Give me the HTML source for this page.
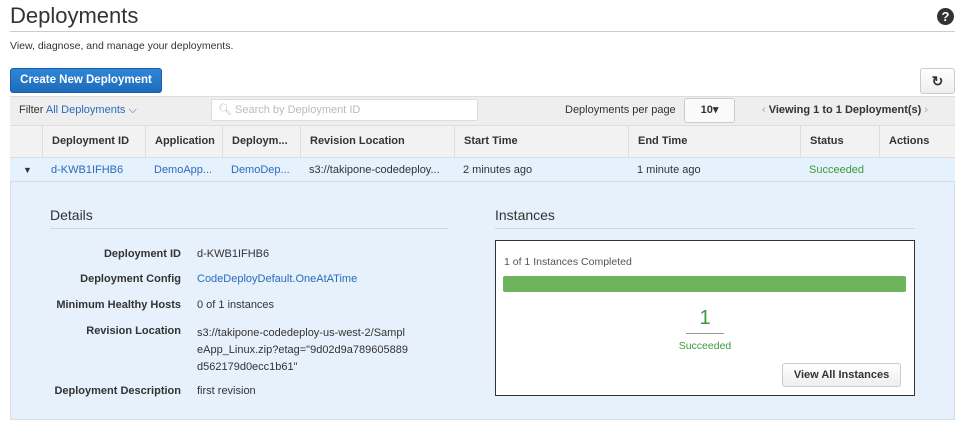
<!DOCTYPE html>
<html><head><style>
*{margin:0;padding:0;box-sizing:border-box}
body{width:960px;height:425px;background:#fff;font-family:"Liberation Sans",sans-serif;font-size:11px;color:#333;position:relative;overflow:hidden}
.a{position:absolute;white-space:nowrap}
.b{font-weight:bold}
.lk{color:#2a6bbd}
.g{color:#3c9a3c}
.th{position:absolute;top:125px;height:33px;line-height:33px;padding-left:9px;font-weight:bold;border-left:1px solid #ddd}
.td{position:absolute;top:158px;height:24px;line-height:24px;padding-left:9px}
.lb{position:absolute;right:779px;font-weight:bold;text-align:right}
.vl{position:absolute;left:197px}
</style></head><body>
<div class="a" style="left:10px;top:3px;font-size:22px;color:#333">Deployments</div>
<div class="a" style="left:937px;top:8px;width:17px;height:17px;border-radius:50%;background:#333;color:#fff;font-weight:bold;font-size:13px;text-align:center;line-height:17px">?</div>
<div class="a" style="left:10px;top:31px;width:945px;height:1px;background:#ccc"></div>
<div class="a" style="left:10px;top:40px;font-size:10.5px">View, diagnose, and manage your deployments.</div>
<div class="a b" style="left:10px;top:68px;width:152px;height:25px;border-radius:3px;background:linear-gradient(#2f86d6,#1e6cbc);border:1px solid #1a5fa8;color:#fff;text-align:center;line-height:23px;font-size:11.5px">Create New Deployment</div>
<div class="a" style="left:920px;top:68px;width:35px;height:26px;border:1px solid #ccc;border-radius:3px;background:linear-gradient(#fff,#eee);text-align:center;line-height:24px;font-weight:bold;font-size:14px">&#x21bb;</div>
<div class="a" style="left:10px;top:96px;width:945px;height:29px;background:#eee;border-top:1px solid #ddd"></div>
<div class="a" style="left:19px;top:104px">Filter <span class="lk">All Deployments &#x2335;</span></div>
<div class="a" style="left:211px;top:99px;width:267px;height:22px;background:#fff;border:1px solid #ddd;border-radius:2px;color:#bbb;line-height:20px;padding-left:6px">&#x1F50D;&#xFE0E; Search by Deployment ID</div>
<div class="a" style="left:565px;top:104px">Deployments per page</div>
<div class="a b" style="left:684px;top:98px;width:51px;height:25px;background:#fafafa;border:1px solid #ccc;border-radius:3px;text-align:center;line-height:23px">10&#x25BE;</div>
<div class="a" style="left:762px;top:104px"><span style="color:#aaa">&lsaquo;</span> <b>Viewing 1 to 1 Deployment(s)</b> <span style="color:#aaa">&rsaquo;</span></div>
<div class="a" style="left:10px;top:125px;width:945px;height:33px;background:#f2f2f2;border-top:1px solid #ddd;border-bottom:1px solid #ddd"></div>
<div class="th" style="left:42px">Deployment ID</div>
<div class="th" style="left:145px">Application</div>
<div class="th" style="left:222px">Deploym...</div>
<div class="th" style="left:300px">Revision Location</div>
<div class="th" style="left:454px">Start Time</div>
<div class="th" style="left:628px">End Time</div>
<div class="th" style="left:800px">Status</div>
<div class="th" style="left:879px">Actions</div>
<div class="a" style="left:10px;top:158px;width:945px;height:24px;background:#e5f1fc;border-bottom:1px solid #d4dde6"></div>
<div class="td" style="left:14px;font-size:9px">&#x25BC;</div>
<div class="td lk" style="left:42px">d-KWB1IFHB6</div>
<div class="td lk" style="left:145px">DemoApp...</div>
<div class="td lk" style="left:222px">DemoDep...</div>
<div class="td" style="left:300px">s3://takipone-codedeploy...</div>
<div class="td" style="left:454px">2 minutes ago</div>
<div class="td" style="left:628px">1 minute ago</div>
<div class="td g" style="left:800px">Succeeded</div>
<div class="a" style="left:10px;top:182px;width:945px;height:238px;background:#e6f1fc;border:1px solid #d8dde3;border-top:none"></div>
<div class="a" style="left:50px;top:207px;font-size:14px">Details</div>
<div class="a" style="left:50px;top:228px;width:398px;height:1px;background:#cdd5dd"></div>
<div class="lb" style="top:248px">Deployment ID</div><div class="vl" style="top:248px">d-KWB1IFHB6</div>
<div class="lb" style="top:273px">Deployment Config</div><div class="vl lk" style="top:273px">CodeDeployDefault.OneAtATime</div>
<div class="lb" style="top:299px">Minimum Healthy Hosts</div><div class="vl" style="top:299px">0 of 1 instances</div>
<div class="lb" style="top:325px">Revision Location</div><div class="vl" style="top:325px;line-height:17px">s3://takipone-codedeploy-us-west-2/Sampl<br>eApp_Linux.zip?etag="9d02d9a789605889<br>d562179d0ecc1b61"</div>
<div class="lb" style="top:385px">Deployment Description</div><div class="vl" style="top:385px">first revision</div>
<div class="a" style="left:495px;top:207px;font-size:14px">Instances</div>
<div class="a" style="left:495px;top:228px;width:420px;height:1px;background:#cdd5dd"></div>
<div class="a" style="left:495px;top:240px;width:420px;height:156px;background:#fff;border:1px solid #333"></div>
<div class="a" style="left:504px;top:256px;font-size:10.5px;color:#555">1 of 1 Instances Completed</div>
<div class="a" style="left:503px;top:276px;width:403px;height:16px;background:#6db55a;border-radius:2px"></div>
<div class="a g" style="left:686px;top:307px;width:38px;text-align:center;font-size:20px">1</div>
<div class="a" style="left:686px;top:333px;width:38px;height:1px;background:#999"></div>
<div class="a g" style="left:665px;top:340px;width:80px;text-align:center;font-size:10.5px">Succeeded</div>
<div class="a b" style="left:782px;top:363px;width:119px;height:24px;border:1px solid #ccc;border-radius:3px;background:linear-gradient(#fff,#eee);text-align:center;line-height:22px">View All Instances</div>
</body></html>
